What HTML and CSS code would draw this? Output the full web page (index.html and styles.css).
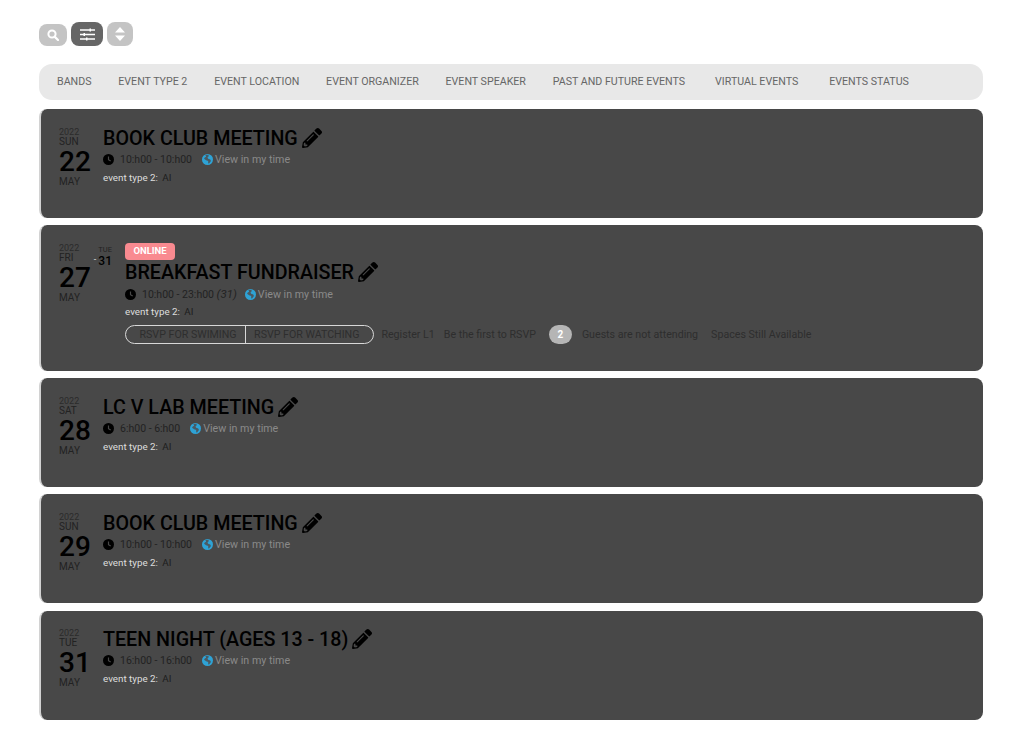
FILE: index.html
```html
<!DOCTYPE html>
<html lang="en">
<head>
  <meta charset="UTF-8">
  <title>Events</title>
  <link rel="stylesheet" href="styles.css">
</head>
<body>

<svg class="icon-defs" width="0" height="0" aria-hidden="true">
  <symbol id="pencil" viewBox="0 0 512 512">
    <path d="M497.9 142.1l-46.1 46.1c-4.7 4.7-12.3 4.7-17 0l-111-111c-4.7-4.7-4.7-12.3 0-17l46.1-46.1c18.7-18.7 49.1-18.7 67.9 0l60.1 60.1c18.8 18.7 18.8 49.1 0 67.9zM284.2 99.8L21.6 362.4.4 483.9c-2.9 16.4 11.4 30.6 27.8 27.8l121.5-21.3 262.6-262.6c4.7-4.7 4.7-12.3 0-17l-111-111c-4.8-4.7-12.4-4.7-17.1 0zM124.1 339.9c-5.5-5.5-5.5-14.3 0-19.8l154-154c5.5-5.5 14.3-5.5 19.8 0s5.5 14.3 0 19.8l-154 154c-5.5 5.5-14.3 5.5-19.8 0zM88 424h48v36.3l-64.5 11.3-31.1-31.1L51.7 376H88v48z"/>
  </symbol>
  <symbol id="clock" viewBox="0 0 16 16">
    <circle cx="8" cy="8" r="8"/>
    <path d="M8 3.5V8.3l3.2 2" fill="none" stroke="#484848" stroke-width="1.7"/>
  </symbol>
  <symbol id="globe" viewBox="0 0 16 16">
    <circle cx="8" cy="8" r="8" fill="#2ea3d6"/>
    <path d="M5 1.5 9 1l1 2-2 2 1 2 3 1 1 2-3 4-1-1V10L6 9 3 7l1-2 2-1z" fill="#4a5a63"/>
  </symbol>
</svg>

<div class="toolbar">
  <button class="tool tool-search" type="button">
    <svg width="12" height="12" viewBox="0 0 12 12"><circle cx="5" cy="5" r="3.6" fill="none" stroke="#fff" stroke-width="2"/><path d="M7.6 7.6 11 11" stroke="#fff" stroke-width="2.2" stroke-linecap="round"/></svg>
  </button>
  <button class="tool tool-filter" type="button">
    <svg width="15" height="13" viewBox="0 0 15 13">
      <path d="M0 2h15M0 6.5h15M0 11h15" stroke="#fff" stroke-width="1.4"/>
      <path d="M9.5 .5h1.5v3H9.5zM3.5 5h1.5v3H3.5zM6 9.5h1.5v3H6z" fill="#fff"/>
    </svg>
  </button>
  <button class="tool tool-sort" type="button">
    <svg width="10" height="14" viewBox="0 0 10 14"><path d="M5 0 10 5.6H0zM5 14 0 8.4H10z" fill="#fff"/></svg>
  </button>
</div>

<nav class="filter-bar">
  <a>Bands</a>
  <a>Event Type 2</a>
  <a>Event Location</a>
  <a>Event Organizer</a>
  <a>Event Speaker</a>
  <a class="wide">Past and Future Events</a>
  <a class="wider">Virtual Events</a>
  <a>Events Status</a>
</nav>

<div class="event-list">

  <article class="event">
    <div class="date">
      <span class="year">2022</span>
      <span class="dow">Sun</span>
      <span class="day">22</span>
      <span class="month">May</span>
    </div>
    <div class="info">
      <h2>Book Club Meeting <svg class="edit"><use href="#pencil"/></svg></h2>
      <div class="time-row">
        <svg class="ico"><use href="#clock"/></svg>
        <span class="time">10:h00 - 10:h00</span>
        <svg class="ico globe"><use href="#globe"/></svg>
        <span class="local">View in my time</span>
      </div>
      <div class="type-row"><b>event type 2:</b> <span>AI</span></div>
    </div>
  </article>

  <article class="event event-tall">
    <div class="date date-range">
      <div>
        <span class="year">2022</span>
        <span class="dow">Fri</span>
        <span class="day">27</span>
        <span class="month">May</span>
      </div>
      <span class="dash">-</span>
      <div class="end-date">
        <span class="dow-end">Tue</span>
        <span class="day-end">31</span>
      </div>
    </div>
    <div class="info">
      <span class="badge">Online</span>
      <h2>Breakfast Fundraiser <svg class="edit"><use href="#pencil"/></svg></h2>
      <div class="time-row">
        <svg class="ico"><use href="#clock"/></svg>
        <span class="time">10:h00 - 23:h00 <i>(31)</i></span>
        <svg class="ico globe"><use href="#globe"/></svg>
        <span class="local">View in my time</span>
      </div>
      <div class="type-row"><b>event type 2:</b> <span>AI</span></div>
      <div class="rsvp-row">
        <div class="rsvp-group">
          <a>RSVP for Swiming</a>
          <a>RSVP for Watching</a>
        </div>
        <span class="reg">Register L1</span>
        <span class="first">Be the first to RSVP</span>
        <span class="count">2</span>
        <span class="guests">Guests are not attending</span>
        <span>Spaces Still Available</span>
      </div>
    </div>
  </article>

  <article class="event">
    <div class="date">
      <span class="year">2022</span>
      <span class="dow">Sat</span>
      <span class="day">28</span>
      <span class="month">May</span>
    </div>
    <div class="info">
      <h2>LC V Lab Meeting <svg class="edit"><use href="#pencil"/></svg></h2>
      <div class="time-row">
        <svg class="ico"><use href="#clock"/></svg>
        <span class="time">6:h00 - 6:h00</span>
        <svg class="ico globe"><use href="#globe"/></svg>
        <span class="local">View in my time</span>
      </div>
      <div class="type-row"><b>event type 2:</b> <span>AI</span></div>
    </div>
  </article>

  <article class="event">
    <div class="date">
      <span class="year">2022</span>
      <span class="dow">Sun</span>
      <span class="day">29</span>
      <span class="month">May</span>
    </div>
    <div class="info">
      <h2>Book Club Meeting <svg class="edit"><use href="#pencil"/></svg></h2>
      <div class="time-row">
        <svg class="ico"><use href="#clock"/></svg>
        <span class="time">10:h00 - 10:h00</span>
        <svg class="ico globe"><use href="#globe"/></svg>
        <span class="local">View in my time</span>
      </div>
      <div class="type-row"><b>event type 2:</b> <span>AI</span></div>
    </div>
  </article>

  <article class="event">
    <div class="date">
      <span class="year">2022</span>
      <span class="dow">Tue</span>
      <span class="day">31</span>
      <span class="month">May</span>
    </div>
    <div class="info">
      <h2>Teen Night (Ages 13 - 18) <svg class="edit"><use href="#pencil"/></svg></h2>
      <div class="time-row">
        <svg class="ico"><use href="#clock"/></svg>
        <span class="time">16:h00 - 16:h00</span>
        <svg class="ico globe"><use href="#globe"/></svg>
        <span class="local">View in my time</span>
      </div>
      <div class="type-row"><b>event type 2:</b> <span>AI</span></div>
    </div>
  </article>

</div>

</body>
</html>
```

FILE: styles.css
```css
body {
  margin: 0;
  padding: 22px 41px 0 39px;
  background: #fff;
  font-family: 'Roboto', 'Liberation Sans', sans-serif;
  color: #000;
}
.icon-defs {
  position: absolute;
}
.toolbar {
  display: flex;
  align-items: flex-end;
  gap: 4px;
  height: 24px;
}
.tool {
  display: flex;
  align-items: center;
  justify-content: center;
  height: 24px;
  padding: 0;
  border: none;
  border-radius: 8px;
  background: #c4c4c4;
}
.tool-search {
  width: 28px;
  height: 22px;
}
.tool-filter {
  width: 32px;
  background: #666;
}
.tool-sort {
  width: 26px;
}
.filter-bar {
  display: flex;
  align-items: center;
  height: 36px;
  margin-top: 18px;
  padding: 0 0 2px 18px;
  box-sizing: border-box;
  background: #e8e8e8;
  border-radius: 13px;
}
.filter-bar a {
  margin-right: 26.8px;
  font-size: 10.65px;
  color: #666;
  text-transform: uppercase;
  white-space: nowrap;
}
.filter-bar a.wide {
  margin-right: 30px;
}
.filter-bar a.wider {
  margin-right: 31px;
}
.event-list {
  display: flex;
  flex-direction: column;
  gap: 7px;
  margin-top: 9px;
}
.event {
  display: flex;
  box-sizing: border-box;
  height: 109px;
  padding: 18px 0 0 18px;
  background: #484848;
  border-left: 2px solid #d2d2d2;
  border-radius: 8px;
}
.event:last-child {
  margin-top: 1px;
  padding-top: 17px;
}
.event-tall {
  height: 146px;
}
.date {
  display: flex;
  flex-direction: column;
  flex: none;
  width: 44px;
  color: #222;
  text-transform: uppercase;
}
.date span {
  display: block;
}
.year {
  font-size: 9px;
  line-height: 10px;
  color: #2b2b2b;
}
.dow {
  font-size: 10px;
  line-height: 9px;
}
.day {
  margin-top: 2px;
  font-size: 28px;
  font-weight: 500;
  line-height: 28px;
  color: #000;
}
.month {
  font-size: 10px;
  line-height: 11px;
}
.date-range {
  flex-direction: row;
  width: 66px;
}
.dash {
  margin: 11px 2px 0 3px;
  font-size: 9px;
  line-height: 10px;
  color: #ddd;
}
.end-date {
  width: 18px;
}
.dow-end {
  margin-top: 3px;
  font-size: 7.5px;
  line-height: 8px;
}
.day-end {
  margin-top: 1px;
  font-size: 12px;
  font-weight: 500;
  line-height: 12px;
  color: #000;
}
.info {
  min-width: 0;
}
.info h2 {
  display: flex;
  align-items: center;
  gap: 4px;
  margin: 0;
  padding-top: 1px;
  font-size: 19.7px;
  font-weight: 500;
  line-height: 22px;
  color: #000;
  text-transform: uppercase;
  white-space: nowrap;
}
.edit {
  width: 20px;
  height: 20px;
  margin-top: -2px;
  fill: #000;
}
.time-row {
  display: flex;
  align-items: center;
  height: 14px;
  margin-top: 2px;
  font-size: 10.5px;
  color: #222;
}
.event-tall .time-row {
  margin-top: 3px;
}
.ico {
  flex: none;
  width: 11px;
  height: 11px;
  margin-right: 6px;
}
.time i {
  font-size: 11.5px;
}
.globe {
  margin-left: 10px;
  margin-right: 2px;
}
.event-tall .globe {
  margin-left: 8px;
}
.local {
  font-size: 10.7px;
  color: #8a8a8a;
}
.type-row {
  margin-top: 6px;
  font-size: 9.8px;
  line-height: 12px;
  color: #1c1c1c;
}
.event-tall .type-row {
  margin-top: 5px;
}
.type-row b {
  margin-right: 2px;
  font-weight: 400;
  color: #ddd;
}
.badge {
  display: block;
  width: 50px;
  height: 17px;
  margin-bottom: 1px;
  background: #f98a90;
  border-radius: 4px;
  font-size: 9.5px;
  font-weight: 700;
  line-height: 16px;
  color: #fff;
  text-align: center;
  text-transform: uppercase;
}
.rsvp-row {
  display: flex;
  align-items: center;
  margin-top: 7px;
  font-size: 10.65px;
  color: #2e2e2e;
  white-space: nowrap;
}
.rsvp-group {
  display: flex;
  height: 17px;
  border: 1px solid #d8d8d8;
  border-radius: 10px;
  margin-right: 7px;
}
.rsvp-group a {
  padding: 0 8.5px 0 13.5px;
  line-height: 17px;
  text-transform: uppercase;
}
.rsvp-group a + a {
  padding: 0 14px 0 8px;
  border-left: 1px solid #d8d8d8;
}
.first {
  margin-left: 9px;
}
.count {
  width: 23px;
  height: 19px;
  margin: 0 10px 0 13px;
  background: #b5b5b5;
  border-radius: 10px;
  font-size: 10px;
  font-weight: 700;
  line-height: 19px;
  color: #fff;
  text-align: center;
}
.guests {
  margin-right: 13px;
}
```
